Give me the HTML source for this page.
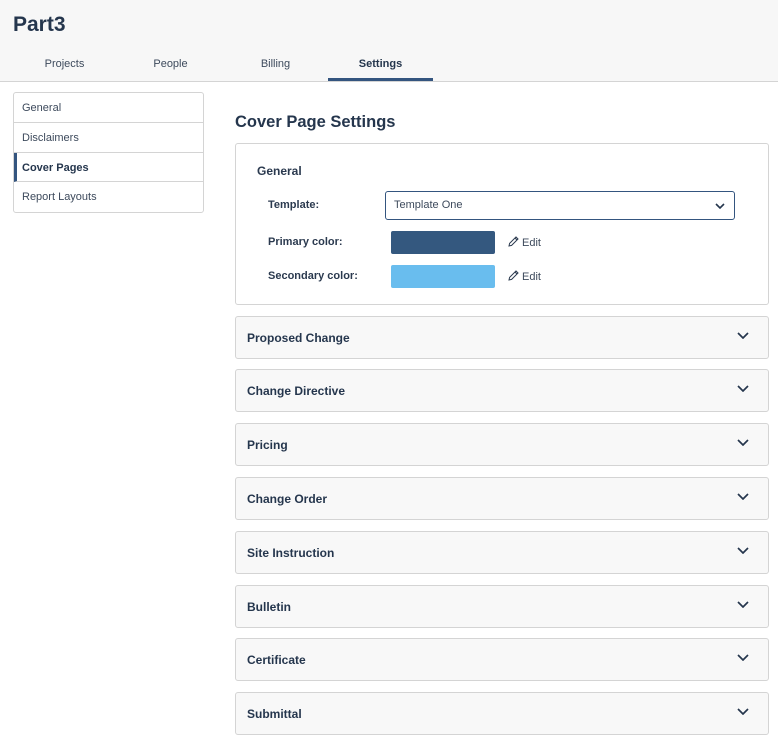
<!DOCTYPE html>
<html><head><meta charset="utf-8"><style>
*{box-sizing:border-box;margin:0;padding:0}
body{width:778px;height:744px;background:#fff;font-family:"Liberation Sans",sans-serif;color:#2b3a4f;position:relative;overflow:hidden}
.hdr{position:absolute;left:0;top:0;width:778px;height:82px;background:#f7f7f7;border-bottom:1px solid #d4d4d4}
.hdr h1{position:absolute;left:13px;top:13px;font-size:21px;font-weight:bold;color:#25364d}
.tab{position:absolute;top:58px;width:105px;text-align:center;font-size:11px;color:#3d4a5c}
.tab.act{font-weight:bold;color:#25364d}
.ul{position:absolute;left:328px;top:78px;width:105px;height:3px;background:#34557f}
.side{position:absolute;left:13px;top:92px;width:191px;border:1px solid #d4d4d4;border-radius:3px}
.side div{height:29.75px;line-height:29px;padding-top:1px;padding-left:8px;font-size:11px;color:#3d4a5c;border-bottom:1px solid #d4d4d4}
.side div:last-child{border-bottom:none}
.side .a{font-weight:bold;color:#25364d;border-left:3px solid #34557f;padding-left:5px}
h2{position:absolute;left:235px;top:113px;font-size:16.5px;font-weight:bold;color:#25364d}
.card{position:absolute;left:235px;top:143px;width:534px;height:162px;border:1px solid #d4d4d4;border-radius:3px}
.lbl{position:absolute;font-size:11px;font-weight:bold;color:#2b3a4f}
.sel{position:absolute;left:149px;top:47px;width:350px;height:29px;border:1px solid #34557f;border-radius:3px;font-size:11px;line-height:27px;padding-left:8px;color:#3d4a5c}
.sw{position:absolute;left:155px;width:104px;height:23px;border-radius:2px}
.edit{position:absolute;left:272px;font-size:11px;color:#3d4a5c}
.acc{position:absolute;left:235px;width:534px;height:43px;border:1px solid #d4d4d4;border-radius:3px;background:#f8f8f8}
.acc span{position:absolute;left:11px;top:14px;font-size:12px;font-weight:bold;color:#25364d}
.acc svg{position:absolute;right:19px;top:15px}
</style></head><body>
<div class="hdr"><h1>Part3</h1>
<div class="tab" style="left:12px">Projects</div>
<div class="tab" style="left:118px">People</div>
<div class="tab" style="left:223px">Billing</div>
<div class="tab act" style="left:328px">Settings</div>
<div class="ul"></div></div>
<div class="side"><div>General</div><div>Disclaimers</div><div class="a">Cover Pages</div><div>Report Layouts</div></div>
<h2>Cover Page Settings</h2>
<div class="card">
<div class="lbl" style="left:21px;top:20px;font-size:12px">General</div>
<div class="lbl" style="left:32px;top:55px">Template:</div>
<div class="sel">Template One<svg style="position:absolute;right:9px;top:11px" width="10" height="6" viewBox="0 0 10 6"><path d="M1 1l4 4 4-4" fill="none" stroke="#25364d" stroke-width="1.6"/></svg></div>
<div class="lbl" style="left:32px;top:92px">Primary color:</div>
<div class="sw" style="top:87px;background:#34587f"></div>
<div class="edit" style="top:92px"><svg width="11" height="11" viewBox="0 0 11 11" style="vertical-align:-1px;margin-right:3px"><path d="M1 10l.6-2.6L8 1l2 2-6.4 6.4z M7 2l2 2" fill="none" stroke="#2b3a4f" stroke-width="1"/></svg>Edit</div>
<div class="lbl" style="left:32px;top:126px">Secondary color:</div>
<div class="sw" style="top:121px;background:#69bdee"></div>
<div class="edit" style="top:126px"><svg width="11" height="11" viewBox="0 0 11 11" style="vertical-align:-1px;margin-right:3px"><path d="M1 10l.6-2.6L8 1l2 2-6.4 6.4z M7 2l2 2" fill="none" stroke="#2b3a4f" stroke-width="1"/></svg>Edit</div>
</div>
<div class="acc" style="top:316px"><span>Proposed Change</span><svg width="12" height="7" viewBox="0 0 12 7"><path d="M1 1l5 5 5-5" fill="none" stroke="#25364d" stroke-width="1.7"/></svg></div>
<div class="acc" style="top:369px"><span>Change Directive</span><svg width="12" height="7" viewBox="0 0 12 7"><path d="M1 1l5 5 5-5" fill="none" stroke="#25364d" stroke-width="1.7"/></svg></div>
<div class="acc" style="top:423px"><span>Pricing</span><svg width="12" height="7" viewBox="0 0 12 7"><path d="M1 1l5 5 5-5" fill="none" stroke="#25364d" stroke-width="1.7"/></svg></div>
<div class="acc" style="top:477px"><span>Change Order</span><svg width="12" height="7" viewBox="0 0 12 7"><path d="M1 1l5 5 5-5" fill="none" stroke="#25364d" stroke-width="1.7"/></svg></div>
<div class="acc" style="top:531px"><span>Site Instruction</span><svg width="12" height="7" viewBox="0 0 12 7"><path d="M1 1l5 5 5-5" fill="none" stroke="#25364d" stroke-width="1.7"/></svg></div>
<div class="acc" style="top:585px"><span>Bulletin</span><svg width="12" height="7" viewBox="0 0 12 7"><path d="M1 1l5 5 5-5" fill="none" stroke="#25364d" stroke-width="1.7"/></svg></div>
<div class="acc" style="top:638px"><span>Certificate</span><svg width="12" height="7" viewBox="0 0 12 7"><path d="M1 1l5 5 5-5" fill="none" stroke="#25364d" stroke-width="1.7"/></svg></div>
<div class="acc" style="top:692px"><span>Submittal</span><svg width="12" height="7" viewBox="0 0 12 7"><path d="M1 1l5 5 5-5" fill="none" stroke="#25364d" stroke-width="1.7"/></svg></div>
</body></html>
